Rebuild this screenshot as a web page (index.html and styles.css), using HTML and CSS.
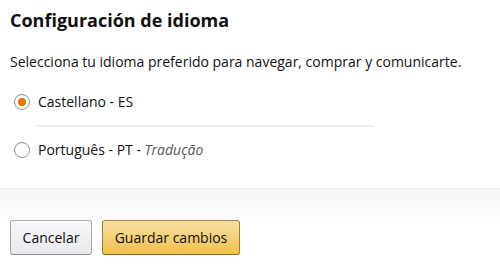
FILE: index.html
```html
<!DOCTYPE html>
<html lang="es">
<head>
<meta charset="utf-8">
<link rel="stylesheet" href="styles.css">
</head>
<body>
<div class="panel">
  <h1 class="title">Configuración de idioma</h1>
  <p class="subtitle">Selecciona tu idioma preferido para navegar, comprar y comunicarte.</p>
  <div class="options">
    <label class="option">
      <span class="radio checked"><span class="dot"></span></span>
      <span class="label">Castellano - ES</span>
    </label>
    <div class="divider"></div>
    <label class="option">
      <span class="radio"></span>
      <span class="label">Português - PT - <em class="note">Tradução</em></span>
    </label>
  </div>
  <div class="footer">
    <button class="btn btn-secondary">Cancelar</button>
    <button class="btn btn-primary">Guardar cambios</button>
  </div>
</div>
</body>
</html>
```

FILE: styles.css
```css
html, body {
  margin: 0;
  padding: 0;
  background: #fff;
}
body {
  font-family: "Open Sans", "Noto Sans", Arial, sans-serif;
  color: #111;
  width: 500px;
  height: 270px;
  overflow: hidden;
}
.panel {
  display: flex;
  flex-direction: column;
}
.title {
  margin: 0;
  padding: 7px 10px 0;
  font-size: 18px;
  font-weight: 700;
  line-height: 26px;
  color: #111;
}
.subtitle {
  margin: 0;
  padding: 19px 10px 0;
  font-size: 14px;
  line-height: 20px;
  color: #111;
}
.options {
  display: flex;
  flex-direction: column;
  padding: 18px 0 0 0;
}
.option {
  display: flex;
  align-items: center;
  gap: 8px;
  padding-left: 14px;
  height: 24px;
}
.radio {
  width: 14px;
  height: 14px;
  border: 1px solid #8d9096;
  border-radius: 50%;
  box-sizing: content-box;
  display: flex;
  align-items: center;
  justify-content: center;
  background: #fff;
  box-shadow: 0 1px 0 rgba(0,0,0,.07) inset;
}
.dot {
  width: 8px;
  height: 8px;
  border-radius: 50%;
  background: #e77600;
}
.label {
  font-size: 14px;
  line-height: 20px;
  color: #111;
}
.note {
  color: #565959;
  font-style: italic;
}
.divider {
  margin: 11px 0 11px 36px;
  width: 338px;
  height: 2px;
  background: #eeeeee;
}
.footer {
  margin-top: 26px;
  border-top: 1px solid #ececec;
  background: linear-gradient(#f5f5f5, #ffffff 40px);
  padding: 31px 10px 0;
  display: flex;
  gap: 10px;
  height: 40px;
}
.btn {
  font-family: inherit;
  font-size: 14px;
  height: 35px;
  border-radius: 3px;
  padding: 0 10px;
  color: #111;
  cursor: pointer;
}
.btn-secondary {
  width: 82px;
  background: linear-gradient(#f7f8fa, #e7e9ec);
  border: 1px solid #adb1b8;
  border-color: #adb1b8 #a2a6ac #8d9096;
}
.btn-primary {
  width: 138px;
  background: linear-gradient(#f7dfa5, #f0c14b);
  border: 1px solid #a88734;
  border-color: #a88734 #9c7e31 #846a29;
}
```
